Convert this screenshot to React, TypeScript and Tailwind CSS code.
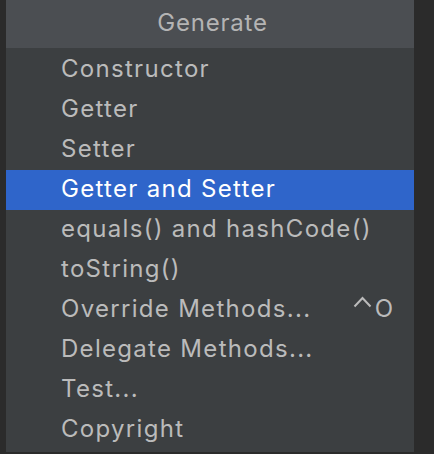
import React from "react";

const items: { label: string; shortcut?: string }[] = [
  { label: "Constructor" },
  { label: "Getter" },
  { label: "Setter" },
  { label: "Getter and Setter" },
  { label: "equals() and hashCode()" },
  { label: "toString()" },
  { label: "Override Methods...", shortcut: "O" },
  { label: "Delegate Methods..." },
  { label: "Test..." },
  { label: "Copyright" },
];

const selected = 3;

export default function App() {
  return (
    <div
      className="w-[434px] h-[454px] bg-[#2b2b2b] pl-[6px] overflow-hidden tracking-[1.3px]"
      style={{ fontFamily: "Inter, 'Noto Sans', sans-serif" }}
    >
      <div className="w-[408px] h-[452px] bg-[#3c3f41] flex flex-col">
        <div className="h-12 bg-[#4b4e52] flex items-center justify-center pl-[5px] pb-[2px] text-[24px] tracking-[0.8px] text-[#b4b4b4]">
          Generate
        </div>
        <ul className="pt-[2px] flex flex-col">
          {items.map((item, i) => (
            <li
              key={item.label}
              className={
                "h-10 flex items-center justify-between pl-[55px] pr-[21px] pb-[3px] text-[24px] " +
                (i === selected ? "bg-[#2f65ca] text-white" : "text-[#bbbbbb]")
              }
            >
              <span>{item.label}</span>
              {item.shortcut && (
                <span className="flex items-start gap-[3px]">
                  {/* control key caret */}
                  <svg width="19" height="12" viewBox="0 0 19 12" className="mt-[5px]">
                    <polyline
                      points="1.5,10.5 9.5,2 17.5,10.5"
                      fill="none"
                      stroke="currentColor"
                      strokeWidth="2"
                    />
                  </svg>
                  <span className="tracking-normal">{item.shortcut}</span>
                </span>
              )}
            </li>
          ))}
        </ul>
      </div>
    </div>
  );
}
